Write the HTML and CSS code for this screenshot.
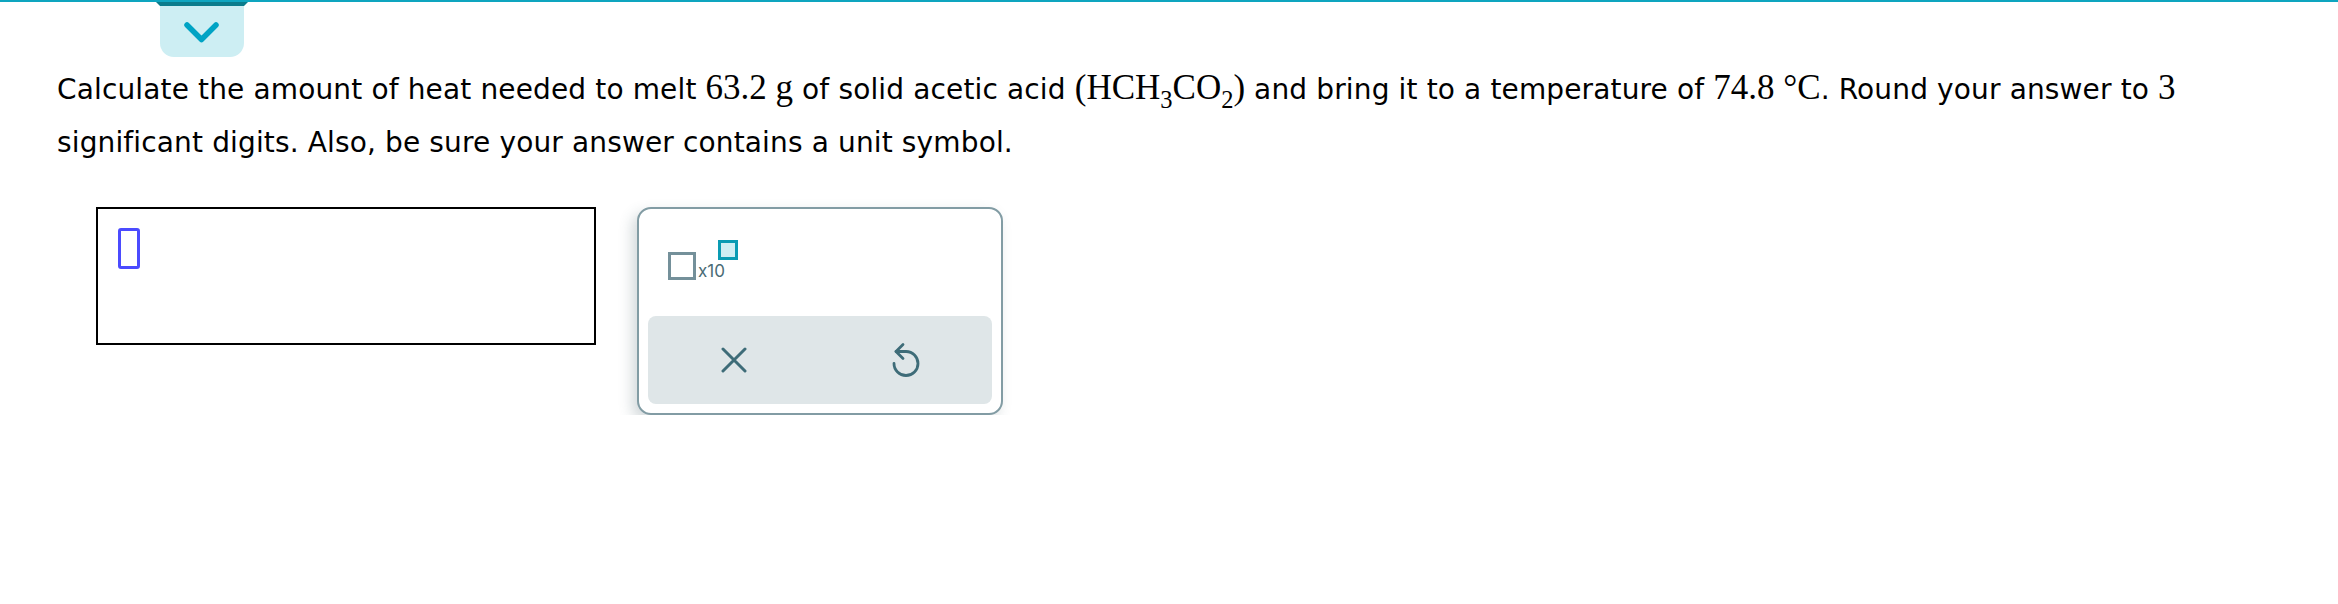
FILE: index.html
```html
<!DOCTYPE html>
<html lang="en">
<head>
    <meta charset="UTF-8">
    <meta name="viewport" content="width=device-width, initial-scale=1.0">
    <title>Question</title>
    <link rel="stylesheet" href="styles.css">
</head>
<body>
    <div class="topbar">
        <div class="tab">
            <svg class="chevron" width="84" height="55" viewBox="0 0 84 55">
                <path d="M27 23 L41.5 37.5 L56 23" fill="none" stroke="#00a3c4" stroke-width="5.5" stroke-linecap="round" stroke-linejoin="round"/>
            </svg>
        </div>
    </div>

    <p class="question">
        Calculate the amount of heat needed to melt <span class="math">63.2 g</span> of solid acetic acid
        <span class="math">(HCH<sub>3</sub>CO<sub>2</sub>)</span> and bring it to a temperature of
        <span class="math">74.8 °C</span>. Round your answer to <span class="math">3</span>
        significant digits. Also, be sure your answer contains a unit symbol.
    </p>

    <div class="answer-row">
        <div class="answer-box">
            <span class="cursor"></span>
        </div>

        <div class="keypad">
            <div class="keypad-top">
                <button class="sci">
                    <span class="sci-base"></span>
                    <span class="sci-text">x10</span>
                    <span class="sci-exp"></span>
                </button>
            </div>
            <div class="keypad-actions">
                <button class="action">
                    <svg width="26" height="26" viewBox="0 0 26 26">
                        <path d="M2 2 L24 24 M24 2 L2 24" fill="none" stroke="#3e6c78" stroke-width="3" stroke-linecap="round"/>
                    </svg>
                </button>
                <button class="action">
                    <svg width="30" height="36" viewBox="0 0 30 36">
                        <path d="M5 9.5 H15 A12 12 0 1 1 3 21.5" fill="none" stroke="#3e6c78" stroke-width="2.8" stroke-linecap="round" stroke-linejoin="round"/>
                        <path d="M12 2.5 L5 9.5 L12 16.5" fill="none" stroke="#3e6c78" stroke-width="2.8" stroke-linecap="round" stroke-linejoin="round"/>
                    </svg>
                </button>
            </div>
        </div>
    </div>
</body>
</html>
```

FILE: styles.css
```css
body {
    margin: 0;
    background: #fff;
    font-family: "DejaVu Sans", Verdana, sans-serif;
    color: #000;
}
.topbar {
    border-top: 2px solid #0ea5bf;
}
.tab {
    position: relative;
    margin-left: 160px;
    width: 84px;
    height: 55px;
    background: #cdeef3;
    border-radius: 0 0 14px 14px;
}
.tab::before {
    content: "";
    position: absolute;
    top: 0;
    left: -4px;
    right: -4px;
    height: 4px;
    background: #0b7c8c;
    clip-path: polygon(0 0, 100% 0, calc(100% - 4px) 100%, 4px 100%);
}
.chevron {
    display: block;
}
.question {
    margin: 4px 0 0 57px;
    width: 2220px;
    font-size: 28px;
    line-height: 53px;
    letter-spacing: 0.14px;
}
.math {
    font-family: "Liberation Serif", "Times New Roman", serif;
    font-size: 35px;
    letter-spacing: 0;
}
.math sub {
    font-size: 0.7em;
    line-height: 0;
    vertical-align: -0.38em;
}
.answer-row {
    display: flex;
    align-items: flex-start;
    gap: 41px;
    margin: 38px 0 0 96px;
}
.answer-box {
    width: 500px;
    height: 138px;
    box-sizing: border-box;
    border: 2px solid #000;
    padding: 19px 0 0 20px;
}
.cursor {
    display: block;
    width: 22px;
    height: 41px;
    box-sizing: border-box;
    border: 3px solid #4b4bff;
    border-radius: 3px;
}
.keypad {
    width: 366px;
    height: 208px;
    box-sizing: border-box;
    border: 2px solid #829ca4;
    border-radius: 14px;
    background: #fff;
    padding: 9px;
    display: flex;
    flex-direction: column;
    box-shadow: -5px 6px 14px rgba(70, 95, 105, 0.24);
}
.keypad-top {
    flex: 1;
}
.sci {
    display: flex;
    align-items: flex-start;
    margin: 22px 0 0 20px;
    padding: 0;
    border: none;
    background: none;
    cursor: pointer;
}
.sci-base {
    width: 28px;
    height: 28px;
    margin-top: 12px;
    box-sizing: border-box;
    border: 3px solid #74909a;
}
.sci-text {
    margin: 22px 0 0 2px;
    font-family: Inter, "Open Sans", sans-serif;
    font-size: 17px;
    line-height: 19px;
    color: #4a6b75;
}
.sci-exp {
    width: 20px;
    height: 20px;
    margin-left: -7px;
    box-sizing: border-box;
    border: 3px solid #0a9bb3;
    background: #cfeef3;
}
.keypad-actions {
    height: 88px;
    background: #dfe6e8;
    border-radius: 8px;
    display: grid;
    grid-template-columns: 1fr 1fr;
}
.action {
    display: flex;
    align-items: center;
    justify-content: center;
    border: none;
    background: none;
    padding: 0;
    cursor: pointer;
}
.action svg {
    display: block;
}
```
